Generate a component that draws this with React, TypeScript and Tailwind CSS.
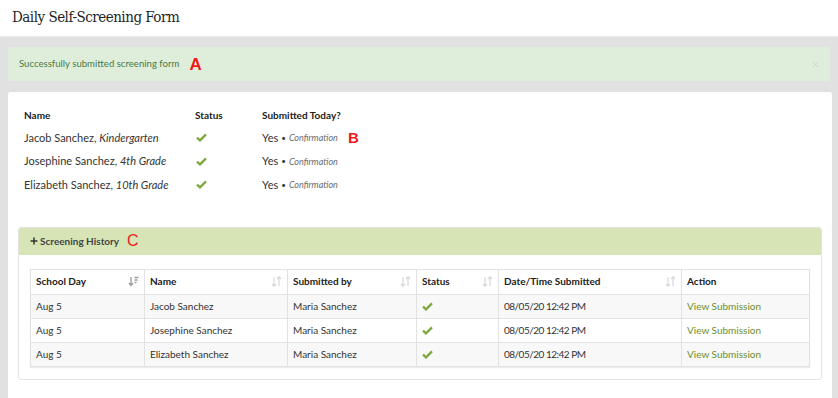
import { Plus, X } from 'lucide-react';

const students = [
  { name: 'Jacob Sanchez', grade: 'Kindergarten', mark: 'B' },
  { name: 'Josephine Sanchez', grade: '4th Grade' },
  { name: 'Elizabeth Sanchez', grade: '10th Grade' },
];

function Check() {
  return (
    <svg width="11" height="9" viewBox="0 0 11 9" className="text-[#7aa83a]">
      <path d="M1 4.6 L4 7.4 L10 1.4" fill="none" stroke="currentColor" strokeWidth="2.2" />
    </svg>
  );
}

function SortIcon({ active }: { active?: boolean }) {
  if (active) {
    return (
      <svg width="11" height="11" viewBox="0 0 11 11" className="text-[#9a9a9a]">
        <path d="M3 1 V9 M1 7 L3 9.5 L5 7" fill="none" stroke="currentColor" strokeWidth="1.3" />
        <path d="M6.5 1.5 H10.5 M6.5 4 H9.5 M6.5 6.5 H8.5" fill="none" stroke="currentColor" strokeWidth="1.3" />
      </svg>
    );
  }
  return (
    <svg width="11" height="11" viewBox="0 0 11 11" className="text-[#d8d8d8]">
      <path d="M3 1 V10 M1 8 L3 10.3 L5 8" fill="none" stroke="currentColor" strokeWidth="1.2" />
      <path d="M8 10 V1 M6 3 L8 0.7 L10 3" fill="none" stroke="currentColor" strokeWidth="1.2" />
    </svg>
  );
}

const columns = [
  { label: 'School Day', width: 'w-[114px]', sort: 'active' },
  { label: 'Name', width: 'w-[143px]', sort: 'on' },
  { label: 'Submitted by', width: 'w-[129px]', sort: 'on' },
  { label: 'Status', width: 'w-[82px]', sort: 'on' },
  { label: 'Date/Time Submitted', width: 'w-[183px]', sort: 'on' },
  { label: 'Action', width: '', sort: '' },
];

export default function App() {
  return (
    <div className="h-[398px] overflow-hidden bg-[#e1e1e1] font-['Lato',sans-serif] text-[10px] text-[#333]">
      <header className="h-[37px] border-b border-[#ececec] bg-white px-3 pt-[6px]">
        <h1 className="font-['DejaVu_Serif_Condensed','DejaVu_Serif',serif] text-[15px] tracking-[-0.5px] text-[#1f1f1f]">
          Daily Self-Screening Form
        </h1>
      </header>

      <div className="px-2 pt-[10px]">
        <div className="flex h-[34px] items-center justify-between rounded-[2px] bg-[#dfeedb] pl-[11px] pr-[10px]">
          <p className="flex items-center text-[9.6px] text-[#4a7a45]">
            Successfully submitted screening form
            <span className="ml-[10px] font-['Liberation_Sans',sans-serif] text-[17px] font-bold leading-none text-[#f01a1a]">A</span>
          </p>
          <X size={9} strokeWidth={2} className="text-[#c1d3bd]" />
        </div>

        <section className="mt-[11px] mr-[-2px] h-[320px] rounded-t-[3px] bg-white px-[10px] pt-[16px]">
          <div className="grid grid-cols-[171px_67px_1fr] px-[6px]">
            <p className="font-bold text-[#222]">Name</p>
            <p className="font-bold text-[#222]">Status</p>
            <p className="font-bold text-[#222]">Submitted Today?</p>
          </div>
          <div className="mt-[3px] px-[6px] text-[11px]">
            {students.map((s) => (
              <div key={s.name} className="grid h-[23.5px] grid-cols-[171px_67px_1fr] items-center">
                <p>
                  {s.name}, <em>{s.grade}</em>
                </p>
                <div className="pl-[1px]">
                  <Check />
                </div>
                <p className="flex items-center">
                  Yes <span className="mx-[3px] text-[8px]">•</span>
                  <em className="text-[9px] text-[#6b6b6b]">Confirmation</em>
                  {s.mark ? (
                    <span className="ml-[10px] font-['Liberation_Sans',sans-serif] text-[15px] font-bold leading-none text-[#f01a1a]">
                      {s.mark}
                    </span>
                  ) : null}
                </p>
              </div>
            ))}
          </div>

          <div className="mt-[30px] overflow-hidden rounded-[3px] border border-[#e2e2e2]">
            <div className="flex h-[27px] items-center bg-[#d7e4b6] pl-[10px]">
              <Plus size={10} strokeWidth={3.5} className="text-[#333]" />
              <span className="ml-[1px] font-bold text-[#444]">Screening History</span>
              <span className="ml-[8px] font-['Liberation_Sans',sans-serif] text-[16px] leading-none text-[#f01a1a]">C</span>
            </div>
            <div className="px-[11px] pt-[14px] pb-[12px]">
              <table className="w-[780px] border-collapse border border-[#e2e2e2] shadow-[0_1px_1px_rgba(0,0,0,0.08)]">
                <thead>
                  <tr className="h-[25px]">
                    {columns.map((c) => (
                      <th key={c.label} className={`${c.width} border border-[#e2e2e2] px-[5px] text-left font-bold text-[#222]`}>
                        <div className="flex items-center justify-between">
                          <span>{c.label}</span>
                          {c.sort === 'active' ? <SortIcon active /> : c.sort === 'on' ? <SortIcon /> : null}
                        </div>
                      </th>
                    ))}
                  </tr>
                </thead>
                <tbody>
                  {students.map((s, i) => (
                    <tr key={s.name} className={`h-[24.3px] ${i % 2 === 0 ? 'bg-[#f8f8f8]' : 'bg-white'}`}>
                      <td className="border border-[#e2e2e2] px-[5px]">Aug 5</td>
                      <td className="border border-[#e2e2e2] px-[5px]">{s.name}</td>
                      <td className="border border-[#e2e2e2] px-[5px]">Maria Sanchez</td>
                      <td className="border border-[#e2e2e2] px-[5px]">
                        <Check />
                      </td>
                      <td className="border border-[#e2e2e2] px-[5px] tracking-[-0.5px]">08/05/20 12:42 PM</td>
                      <td className="border border-[#e2e2e2] px-[5px] text-[#6a8f2e]">View Submission</td>
                    </tr>
                  ))}
                </tbody>
              </table>
            </div>
          </div>
        </section>
      </div>
    </div>
  );
}
